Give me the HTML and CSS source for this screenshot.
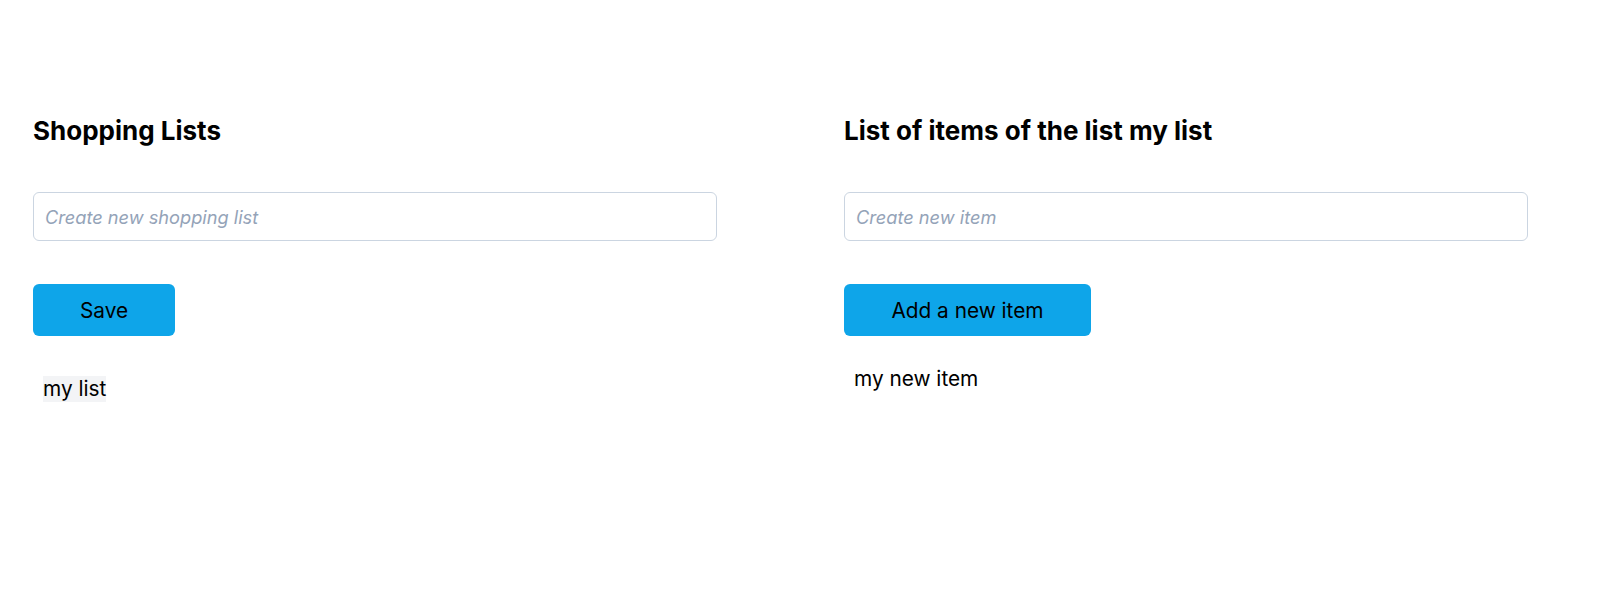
FILE: index.html
```html
<!DOCTYPE html>
<html>
<head>
<meta charset="utf-8">
<link rel="stylesheet" href="styles.css">
</head>
<body>
<main class="page">
  <section class="column">
    <h2 class="title">Shopping Lists</h2>
    <input class="field" type="text" placeholder="Create new shopping list">
    <button class="btn btn-save">Save</button>
    <ul class="lists">
      <li class="list-entry"><span class="list-name">my list</span></li>
    </ul>
  </section>
  <section class="column">
    <h2 class="title">List of items of the list my list</h2>
    <input class="field" type="text" placeholder="Create new item">
    <button class="btn btn-add">Add a new item</button>
    <ul class="items">
      <li class="item">my new item</li>
    </ul>
  </section>
</main>
</body>
</html>
```
FILE: styles.css
```css
* { box-sizing: border-box; }
html, body { margin: 0; padding: 0; background: #fff; }
body { font-family: Inter, "Noto Sans", sans-serif; color: #000; }
.page {
  display: grid;
  grid-template-columns: 684px 684px;
  column-gap: 127px;
  padding: 115px 0 0 33px;
}
.column { display: flex; flex-direction: column; align-items: flex-start; }
.title {
  margin: 0;
  font-size: 26px;
  line-height: 32px;
  font-weight: 700;
}
.field {
  margin-top: 45px;
  width: 100%;
  height: 49px;
  border: 1px solid #cbd5e1;
  border-radius: 6px;
  padding: 0 11px;
  font-family: Inter, sans-serif;
  font-size: 18.2px;
  outline: none;
}
.field::placeholder { color: #94a3b8; font-style: italic; }
.btn {
  margin-top: 43px;
  height: 52px;
  border: none;
  border-radius: 6px;
  background: #0ea5e9;
  color: #000;
  font-family: Inter, sans-serif;
  font-size: 20.8px;
  padding: 0;
}
.btn-save { width: 142px; }
.btn-add { width: 247px; }
.lists, .items { list-style: none; margin: 0; padding: 0; }
.lists { margin-top: 40px; padding-left: 10px; }
.list-name { background: #f3f4f6; font-size: 20.8px; line-height: 26px; display: inline-block; }
.items { margin-top: 30px; padding-left: 10px; }
.item { font-size: 20.8px; line-height: 26px; }
```
